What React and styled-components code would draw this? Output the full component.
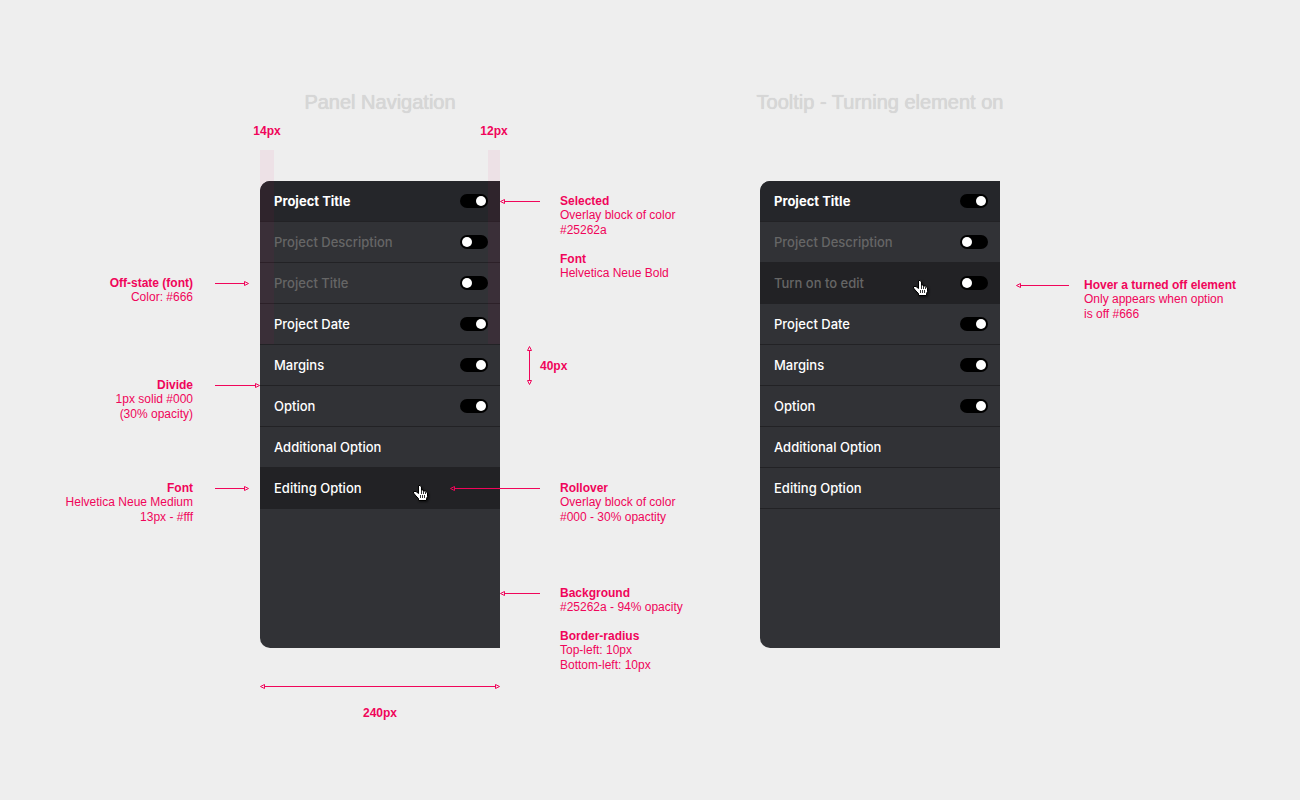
import React, { useState } from 'react'
import styled, { createGlobalStyle } from 'styled-components'

const pink = '#f0055a'

const GlobalStyle = createGlobalStyle`
  body {
    margin: 0;
    background-color: #eee;
    font-family: 'Liberation Sans', Arial, sans-serif;
  }
`

const Sheet = styled.main`
  display: grid;
  grid-template-columns: 13fr 240px 13fr 240px 15fr;
  grid-template-rows: 24px 467px auto;
  row-gap: 67px;
  padding: 90px 0 80px;
`

const Heading = styled.h2`
  grid-row: 1;
  grid-column: ${props => props.$column};
  justify-self: center;
  margin: 0;
  font-size: 20px;
  line-height: 24px;
  font-weight: 400;
  color: #d6d6d6;
  text-shadow: 0 0 currentColor, 0 0 1px currentColor;
  white-space: nowrap;
`

const PanelContainer = styled.section`
  position: relative;
  grid-row: 2;
  grid-column: ${props => props.$column};
`

const PanelList = styled.ul`
  box-sizing: border-box;
  height: 100%;
  margin: 0;
  padding: 0;
  list-style: none;
  overflow: hidden;
  border-radius: 10px 0 0 10px;
  background-color: rgba(37, 38, 42, 0.94);
`

const rowColors = {
  selected: '#25262a',
  hover: 'rgba(0, 0, 0, 0.3)'
}

const PanelRow = styled.li`
  position: relative;
  display: flex;
  align-items: center;
  justify-content: space-between;
  height: 40px;
  padding: 0 12px 0 14px;
  border-bottom: 1px solid rgba(0, 0, 0, 0.3);
  background-color: ${props => rowColors[props.$state] || 'transparent'};
  background-clip: padding-box;
`

const RowLabel = styled.label`
  font-family: Inter, 'Liberation Sans', sans-serif;
  font-size: 13px;
  line-height: 16px;
  font-weight: ${props => props.$bold ? 700 : 500};
  color: ${props => props.$off ? '#666' : '#fff'};
`

const RowLink = styled(RowLabel)`
  text-decoration: none;
`

const Toggle = styled.input`
  appearance: none;
  display: flex;
  justify-content: flex-start;
  box-sizing: border-box;
  width: 28px;
  height: 14px;
  margin: 0;
  padding: 2px;
  border-radius: 7px;
  background-color: #000;
  cursor: pointer;

  &::before {
    content: '';
    width: 10px;
    height: 10px;
    border-radius: 5px;
    background-color: #fff;
  }

  &:checked {
    justify-content: flex-end;
  }
`

const Pointer = styled.svg`
  position: absolute;
  left: 153px;
  top: 16px;
  filter: drop-shadow(1px 1px 1px rgba(0, 0, 0, 0.6));
`

const Guide = styled.div`
  position: absolute;
  top: -57px;
  ${props => props.$side}: 0;
  width: ${props => props.$width}px;
  display: flex;
  flex-direction: column;
  align-items: center;
  gap: 12px;
  pointer-events: none;
`

const GuideBar = styled.div`
  width: 100%;
  height: 194px;
  background-color: rgba(240, 5, 90, 0.05);
`

const Measure = styled.span`
  font-size: 12px;
  line-height: 14px;
  font-weight: 700;
  color: ${pink};
`

// one track for each panel row, the rest of the panel is the last track
const NoteColumn = styled.div`
  grid-row: 2;
  grid-column: ${props => props.$column};
  display: grid;
  grid-template-rows: repeat(8, 41px) auto;
`

const Note = styled.div`
  position: relative;
  z-index: 1;
  grid-area: ${props => props.$row} / 1;
  height: 0;
  display: flex;
  align-items: flex-start;
  justify-content: ${props => props.$side === 'left' ? 'flex-end' : 'flex-start'};
  gap: ${props => props.$gap || 20}px;
  padding-top: ${props => props.$drop || 13}px;
  padding-left: ${props => props.$indent || 0}px;
  text-align: ${props => props.$side === 'left' ? 'right' : 'left'};
`

const NoteText = styled.dl`
  margin: 0;
  font-size: 12px;
  color: ${pink};
  white-space: nowrap;

  dt {
    line-height: 14px;
    font-weight: 700;
  }

  dd {
    margin: 0;
    line-height: 15px;
  }

  dd + dt {
    margin-top: 14px;
  }
`

const ArrowSlot = styled.div`
  width: ${props => props.$width}px;
  margin-left: ${props => props.$over ? -props.$over : 0}px;
  flex: none;
`

const ArrowShape = styled.div`
  display: flex;
  align-items: center;
  width: ${props => props.$length ? `${props.$length}px` : '100%'};
  height: 15px;
`

const ArrowLine = styled.span`
  flex: 1;
  height: 1px;
  background-color: ${pink};
`

const HeadSvg = styled.svg`
  flex: none;
  display: block;
`

const HeightMeasure = styled.div`
  grid-area: 5 / 1;
  display: flex;
  align-items: center;
  gap: 7px;
  height: 41px;
  padding-left: 27px;
`

const WidthMeasure = styled.div`
  grid-row: 3;
  grid-column: 2;
  display: flex;
  flex-direction: column;
  align-items: center;
  gap: 12px;
  margin-top: -36px;
`

function Head ({ flip }) {
  return (
    <HeadSvg width='5' height='5' viewBox='0 0 5 5'>
      <path
        d={flip ? 'M4.5 2.5L0.5 0.5V4.5Z' : 'M0.5 2.5L4.5 0.5V4.5Z'}
        fill='none'
        stroke={pink}
        strokeLinejoin='round'
      />
    </HeadSvg>
  )
}

function Arrow ({ start, end, length }) {
  return (
    <ArrowShape $length={length}>
      {start ? <Head /> : null}
      <ArrowLine />
      {end ? <Head flip /> : null}
    </ArrowShape>
  )
}

function VerticalArrow () {
  return (
    <svg width='6' height='39' viewBox='0 0 6 39'>
      <path d='M2.5 5V34' stroke={pink} />
      <path d='M2.5 0.5L4.5 4.5H0.5Z M2.5 38.5L4.5 34.5H0.5Z' fill='none' stroke={pink} strokeLinejoin='round' />
    </svg>
  )
}

function HandPointer () {
  return (
    <Pointer width='16' height='18' viewBox='0 0 16 18' aria-hidden='true'>
      <path
        d='M5.5 1.5H7L8.5 3V6H10L11 7H12.5L14.5 9V12.5L13.5 14.5V16.5H5.5V14.5L3 12L0.5 9V7.5H3L5.5 9.5Z'
        fill='#fff'
        stroke='#000'
      />
      <path d='M8.5 6V10M10.5 7V10M12.5 8V10M7.5 11V14M9.5 11V14M11.5 11V14' stroke='#000' strokeWidth='0.8' />
    </Pointer>
  )
}

function Row ({ id, item }) {
  const [on, setOn] = useState(item.on)
  const hasToggle = item.on !== undefined

  return (
    <PanelRow $state={item.state}>
      {hasToggle
        ? <RowLabel htmlFor={id} $off={!on} $bold={item.state === 'selected'}>{item.name}</RowLabel>
        : <RowLink as='a' href='#'>{item.name}</RowLink>}
      {hasToggle
        ? <Toggle id={id} type='checkbox' checked={on} onChange={e => setOn(e.target.checked)} />
        : null}
      {item.state === 'hover' ? <HandPointer /> : null}
    </PanelRow>
  )
}

function Panel ({ name, column, items, children }) {
  return (
    <PanelContainer $column={column}>
      <PanelList>
        {items.map((item, index) => (
          <Row key={index} id={`${name}-${index}`} item={item} />
        ))}
      </PanelList>
      {children}
    </PanelContainer>
  )
}

const navigationItems = [
  { name: 'Project Title', on: true, state: 'selected' },
  { name: 'Project Description', on: false },
  { name: 'Project Title', on: false },
  { name: 'Project Date', on: true },
  { name: 'Margins', on: true },
  { name: 'Option', on: true },
  { name: 'Additional Option' },
  { name: 'Editing Option', state: 'hover' }
]

const tooltipItems = [
  { name: 'Project Title', on: true, state: 'selected' },
  { name: 'Project Description', on: false },
  { name: 'Turn on to edit', on: false, state: 'hover' },
  { name: 'Project Date', on: true },
  { name: 'Margins', on: true },
  { name: 'Option', on: true },
  { name: 'Additional Option' },
  { name: 'Editing Option' }
]

export default function App () {
  return (
    <>
      <GlobalStyle />
      <Sheet>
        <Heading $column={2}>Panel Navigation</Heading>
        <Heading $column={4}>Tooltip - Turning element on</Heading>

        <NoteColumn $column={1}>
          <Note $row={3} $side='left' $gap={22}>
            <NoteText>
              <dt>Off-state (font)</dt>
              <dd>Color: #666</dd>
            </NoteText>
            <ArrowSlot $width={45}><Arrow end length={34} /></ArrowSlot>
          </Note>
          <Note $row={5} $side='left' $gap={22} $drop={33}>
            <NoteText>
              <dt>Divide</dt>
              <dd>1px solid #000</dd>
              <dd>(30% opacity)</dd>
            </NoteText>
            <ArrowSlot $width={45}><Arrow end /></ArrowSlot>
          </Note>
          <Note $row={8} $side='left' $gap={22}>
            <NoteText>
              <dt>Font</dt>
              <dd>Helvetica Neue Medium</dd>
              <dd>13px - #fff</dd>
            </NoteText>
            <ArrowSlot $width={45}><Arrow end length={34} /></ArrowSlot>
          </Note>
        </NoteColumn>

        <Panel name='navigation' column={2} items={navigationItems}>
          <Guide $side='left' $width={14}>
            <Measure>14px</Measure>
            <GuideBar />
          </Guide>
          <Guide $side='right' $width={12}>
            <Measure>12px</Measure>
            <GuideBar />
          </Guide>
        </Panel>

        <NoteColumn $column={3}>
          <Note $row={1}>
            <ArrowSlot $width={40}><Arrow start /></ArrowSlot>
            <NoteText>
              <dt>Selected</dt>
              <dd>Overlay block of color</dd>
              <dd>#25262a</dd>
              <dt>Font</dt>
              <dd>Helvetica Neue Bold</dd>
            </NoteText>
          </Note>
          <HeightMeasure>
            <VerticalArrow />
            <Measure>40px</Measure>
          </HeightMeasure>
          <Note $row={8}>
            <ArrowSlot $width={90} $over={50}><Arrow start /></ArrowSlot>
            <NoteText>
              <dt>Rollover</dt>
              <dd>Overlay block of color</dd>
              <dd>#000 - 30% opactity</dd>
            </NoteText>
          </Note>
          <Note $row={9} $drop={77}>
            <ArrowSlot $width={40}><Arrow start /></ArrowSlot>
            <NoteText>
              <dt>Background</dt>
              <dd>#25262a - 94% opacity</dd>
              <dt>Border-radius</dt>
              <dd>Top-left: 10px</dd>
              <dd>Bottom-left: 10px</dd>
            </NoteText>
          </Note>
        </NoteColumn>

        <Panel name='tooltip' column={4} items={tooltipItems} />

        <NoteColumn $column={5}>
          <Note $row={3} $gap={15} $indent={16} $drop={15}>
            <ArrowSlot $width={53}><Arrow start /></ArrowSlot>
            <NoteText>
              <dt>Hover a turned off element</dt>
              <dd>Only appears when option</dd>
              <dd>is off #666</dd>
            </NoteText>
          </Note>
        </NoteColumn>

        <WidthMeasure>
          <Arrow start end />
          <Measure>240px</Measure>
        </WidthMeasure>
      </Sheet>
    </>
  )
}
